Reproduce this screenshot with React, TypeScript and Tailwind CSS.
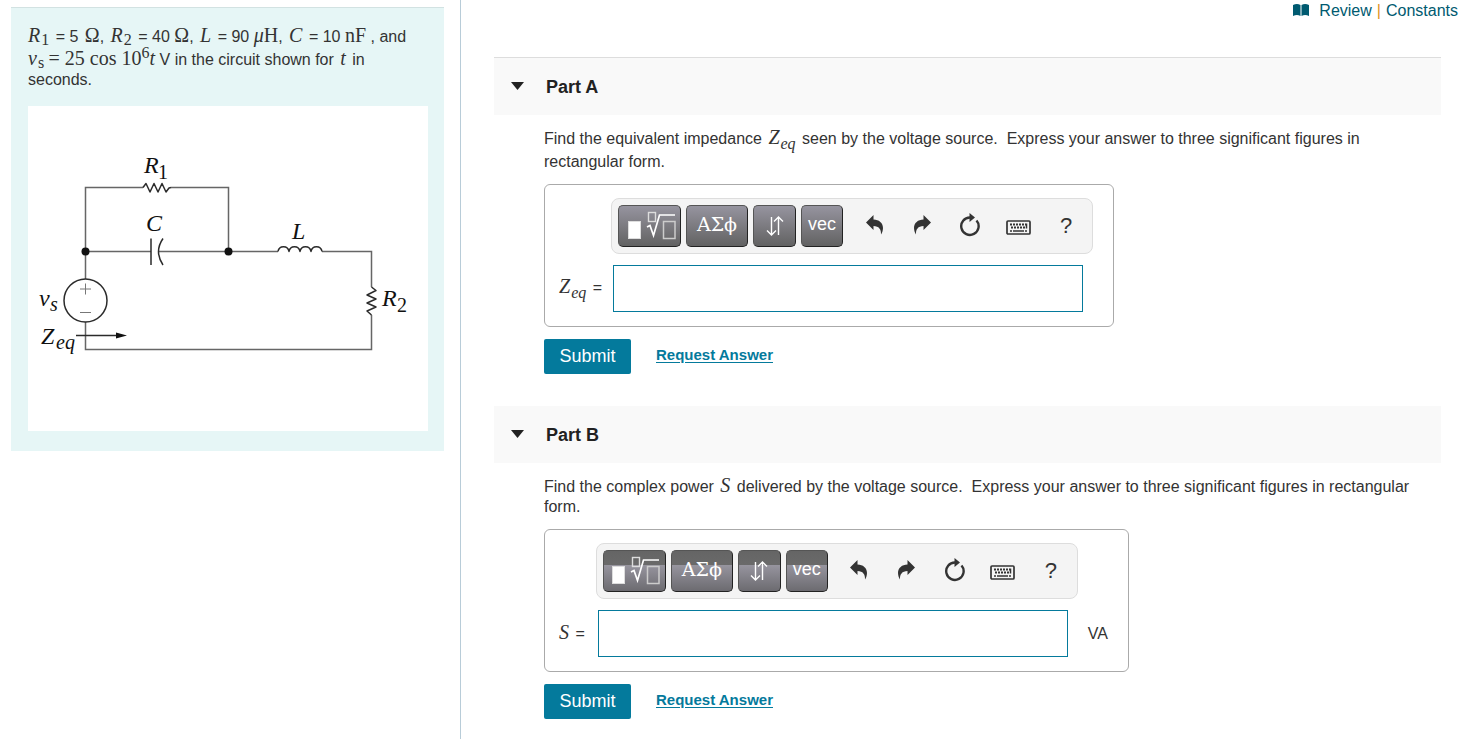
import type { ReactNode } from "react";

interface MathProps {
  children: ReactNode;
}

interface ToolbarProps {
  split?: boolean;
}

interface PartProps {
  id: string;
  title: string;
  first?: boolean;
  split?: boolean;
  question: ReactNode;
  label: ReactNode;
  unit?: string;
}

// Italic variable
function Var({ children }: MathProps) {
  return <i className="font-['Liberation_Serif',serif] text-[20px] leading-none">{children}</i>;
}

// Upright maths: units, digits, function names
function Rm({ children }: MathProps) {
  return <span className="font-['Liberation_Serif',serif] text-[20px] leading-none">{children}</span>;
}

function Sub({ children }: MathProps) {
  return (
    <sub className="bottom-auto ml-px align-[-3px] font-['Liberation_Serif',serif] text-[16px] leading-[12px]">
      {children}
    </sub>
  );
}

// Keeps a formula on one line with a little air round it
function Formula({ children }: MathProps) {
  return <span className="mx-0.5 whitespace-nowrap">{children}</span>;
}

function Zeq() {
  return (
    <Formula>
      <Var>Z</Var>
      <sub className="bottom-auto ml-px align-[-5px] font-['Liberation_Serif',serif] text-[16px] leading-none italic">
        eq
      </sub>
    </Formula>
  );
}

function Circuit() {
  return (
    <svg
      viewBox="0 0 400 325"
      className="block w-full bg-white"
      role="img"
      aria-label="Circuit diagram"
      fontFamily="'Liberation Serif', serif"
      fontStyle="italic"
      fontSize="24"
      fill="#111"
    >
      {/* wires */}
      <g fill="none" stroke="#666" strokeWidth="1.5">
        <path d="M57.5 173V81.5H115M143 81.5H200.5V145.5" />
        <path d="M57.5 145.5H123M131 145.5H250M294 145.5H343.5V181M343.5 209V243.5H57.5V216" />
      </g>
      {/* components */}
      <g fill="none" stroke="#2b2b2b" strokeWidth="1.5" strokeLinejoin="round">
        <path d="M115 81.5L118 77.5L122 86L126 77.5L130 86L134 77.5L138 86L141 82L143 81.5" />
        <path d="M123 132.5V159M135 132.5Q126 145.5 135 159" />
        <path d="M250 145.5C251 139 260 139 261 145.5C262 139 271 139 272 145.5C273 139 282 139 283 145.5C284 139 293 139 294 145.5" />
        <path d="M343.5 181L348 184.5L339 189L348 193L339 197L348 201L339 205L343.5 209" />
        <circle cx="57.5" cy="194.5" r="21.5" />
        <path d="M52 183H63M57.5 177.5V188.5M52 206.5H63" stroke="#777" strokeWidth="1" />
        <path d="M48 229.5H90" />
      </g>
      <path d="M88 226.5L99 229.5L88 232.5Z" />
      <circle cx="57.5" cy="145.5" r="4" />
      <circle cx="200.5" cy="145.5" r="4" />
      {/* labels */}
      <text x="116" y="67">R</text>
      <text x="130" y="73" fontSize="20" fontStyle="normal">1</text>
      <text x="118" y="125">C</text>
      <text x="264" y="133">L</text>
      <text x="354" y="200">R</text>
      <text x="369" y="206" fontSize="20" fontStyle="normal">2</text>
      <text x="11" y="200">v</text>
      <text x="22" y="205" fontSize="20">s</text>
      <text x="13" y="238">Z</text>
      <text x="28" y="243" fontSize="20">eq</text>
    </svg>
  );
}

function Toolbar({ split }: ToolbarProps) {
  const look = split
    ? "bg-[linear-gradient(#656565_0,#6a6a6a_35%,#96949e_36%,#6c6b70_100%)]"
    : "bg-[linear-gradient(#96949f,#626262)]";
  const dark = `flex h-[42px] items-center justify-center rounded-[5px] border border-[#555] border-r-[#222] border-b-[#222] text-white ${look}`;
  const plain = "flex h-[42px] w-12 items-center justify-center text-[#333]";

  return (
    <div className="flex h-14 items-center gap-[5px] rounded-lg border border-[#ddd] bg-[#f4f4f4] pr-0.5 pl-1.5">
      <button type="button" aria-label="Templates" className={`w-[63px] ${dark}`}>
        <svg width="52" height="30" viewBox="0 0 52 30" fill="none" stroke="#fff">
          <rect x="4.5" y="10.5" width="12" height="17" fill="#fff" stroke="#ddd" />
          <rect x="24.5" y="1.5" width="7" height="9" strokeWidth="1.4" stroke="#ddd" />
          <path d="M23 16L26 14.5L29.5 24.5L35.5 4H51" strokeWidth="1.7" />
          <rect x="39.5" y="10.5" width="11.5" height="17" stroke="#ccc" strokeWidth="1.5" />
        </svg>
      </button>
      <button
        type="button"
        aria-label="Symbols"
        className={`w-[62px] pb-1 font-['DejaVu_Serif',serif] text-[19px] ${dark}`}
      >
        ΑΣϕ
      </button>
      <button type="button" aria-label="Arrows" className={`w-[43px] ${dark}`}>
        <svg width="18" height="22" viewBox="0 0 18 22" fill="none" stroke="#fff" strokeWidth="1.4">
          <path d="M5.5 2V20M1 15.5L5.5 20L10 15.5M12.5 20V2M8 6.5L12.5 2L17 6.5" />
        </svg>
      </button>
      <button type="button" className={`w-[42px] pb-1 text-[18px] ${dark}`}>
        vec
      </button>
      <div className="ml-0.5 flex">
        <button type="button" aria-label="Undo" className={plain}>
          <svg width="17" height="20" viewBox="0 0 17 20" className="mb-0.5" fill="currentColor">
            <path d="M0 7.5L7.5 0V4.5C13 4.5 17 8 17 13C17 15.5 16 18 15 19.5C15.3 14.5 13 11 7.5 11V15Z" />
          </svg>
        </button>
        <button type="button" aria-label="Redo" className={plain}>
          <svg width="17" height="20" viewBox="0 0 17 20" className="mb-0.5" fill="currentColor">
            <path d="M17 7.5L9.5 0V4.5C4 4.5 0 8 0 13C0 15.5 1 18 2 19.5C1.7 14.5 4 11 9.5 11V15Z" />
          </svg>
        </button>
        <button type="button" aria-label="Reset" className={plain}>
          <svg width="20" height="24" viewBox="0 0 20 24" className="mb-0.5" fill="none">
            <path d="M10 4.5A8.7 8.7 0 1 0 16.5 7.5" stroke="currentColor" strokeWidth="2.4" />
            <path d="M9.5 0L15 4.5L9.5 9Z" fill="currentColor" />
          </svg>
        </button>
        <button type="button" aria-label="Keyboard" className={plain}>
          <svg width="25" height="20" viewBox="0 0 25 20" fill="none" stroke="currentColor">
            <rect x="1" y="5" width="23" height="13" rx="1" strokeWidth="1.7" />
            <path d="M4 8.5H20M5 11.5H19" strokeWidth="2" strokeDasharray="2 1" />
            <path d="M4 15H6M7 15H18M19 15H21M20.5 7.5V12.5" strokeWidth="1.5" />
          </svg>
        </button>
        <button type="button" aria-label="Help" className={`pb-0.5 text-[22px] ${plain}`}>
          ?
        </button>
      </div>
    </div>
  );
}

function Part({ id, title, first, split, question, label, unit }: PartProps) {
  return (
    <section>
      <h2 className={`bg-[#f9f9f9] ${first ? "border-t border-[#ddd]" : ""}`}>
        <button
          type="button"
          aria-expanded="true"
          className="flex h-[57px] w-full items-center gap-[22px] pt-0.5 pl-[17px] text-[18px] font-bold text-[#222]"
        >
          <svg width="13" height="8" viewBox="0 0 13 8" className="mb-1" fill="#222">
            <path d="M0 0H13L6.5 8Z" />
          </svg>
          {title}
        </button>
      </h2>
      <div className="pt-3 pl-[50px]">
        <p className="pr-3 text-[16px] leading-5">{question}</p>
        <div className="mt-3 grid w-fit grid-cols-[auto_auto_auto] items-center gap-y-[11px] rounded-md border border-[#aaa] pt-[13px] pr-5 pb-[14px] pl-3">
          <div className="col-start-2">
            <Toolbar split={split} />
          </div>
          <label htmlFor={id} className={`col-start-1 row-start-2 text-[16px] ${unit ? "pr-[11px]" : "pr-[9px]"}`}>
            {label}
            {" ="}
          </label>
          <input
            id={id}
            type="text"
            className="col-start-2 row-start-2 mr-2.5 ml-0.5 h-[47px] border border-[#047a9c] bg-white px-2 text-[18px]"
          />
          {unit && <span className="row-start-2 pl-2.5 text-[16px]">{unit}</span>}
        </div>
        <div className="mt-3 flex items-center gap-[25px]">
          <button type="button" className="h-[35px] w-[87px] rounded-xs bg-[#047a9c] text-[18px] text-white">
            Submit
          </button>
          <a href="#" className="pb-0.5 text-[15px] font-bold text-[#047a9c] underline underline-offset-2">
            Request Answer
          </a>
        </div>
      </div>
    </section>
  );
}

export default function App() {
  return (
    <div className="flex min-h-screen bg-white font-['Liberation_Sans',Arial,sans-serif] text-[#333]">
      <aside className="w-[461px] shrink-0 border-r border-[#b8ccd8] pt-[7px] pr-4 pl-[11px]">
        <div className="border-t border-[#d2e2e2] bg-[#e6f6f6] pt-[17px] pr-4 pb-5 pl-[17px]">
          <p className="mb-4 text-[16px] leading-5">
            <Var>R</Var>
            <Sub>1</Sub>{" "}
            <Formula>= 5</Formula> <Rm>Ω</Rm>,{" "}
            <Formula>
              <Var>R</Var>
              <Sub>2</Sub>
            </Formula>{" "}
            = 40 <Rm>Ω</Rm>,{" "}
            <Formula>
              <Var>L</Var>
            </Formula>{" "}
            = 90{" "}
            <Rm>
              <i>μ</i>H
            </Rm>
            ,{" "}
            <Formula>
              <Var>C</Var>
            </Formula>{" "}
            = 10 <Rm>nF</Rm> , and{" "}
            <span className="whitespace-nowrap">
              <Var>v</Var>
              <Sub>s</Sub> <Rm>= 25 cos 10</Rm>
              <sup className="top-auto align-[7px] font-['Liberation_Serif',serif] text-[16px] leading-[12px]">6</sup>
              <Var>t</Var>
            </span>{" "}
            V in the circuit shown for{" "}
            <Formula>
              <Var>t</Var>
            </Formula>{" "}
            in seconds.
          </p>
          <Circuit />
        </div>
      </aside>

      <main className="min-w-0 flex-1 pl-[33px]">
        <nav className="flex h-[57px] items-start justify-end gap-[5px] pt-px pr-0.5 text-[16px] leading-5 text-[#005a70]">
          <a href="#" className="flex items-center gap-[10px]">
            <svg width="16" height="12" viewBox="0 0 16 12" className="mb-0.5" fill="currentColor">
              <path d="M0 1Q4 -1 7.5 1V12Q4 10 0 12ZM8.5 1Q12 -1 16 1V12Q12 10 8.5 12Z" />
            </svg>
            Review
          </a>
          <span className="text-[#e09520]">|</span>
          <a href="#">Constants</a>
        </nav>

        <div className="flex flex-col gap-8 pr-[19px]">
          <Part
            id="zeq"
            title="Part A"
            first
            question={
              <>
                Find the equivalent impedance <Zeq /> seen by the voltage source.&nbsp; Express your answer to three
                significant figures in rectangular form.
              </>
            }
            label={<Zeq />}
          />
          <Part
            id="power"
            title="Part B"
            split
            question={
              <>
                Find the complex power{" "}
                <Formula>
                  <Var>S</Var>
                </Formula>{" "}
                delivered by the voltage source.&nbsp; Express your answer to three significant figures in rectangular
                form.
              </>
            }
            label={
              <Formula>
                <Var>S</Var>
              </Formula>
            }
            unit="VA"
          />
        </div>
      </main>
    </div>
  );
}
